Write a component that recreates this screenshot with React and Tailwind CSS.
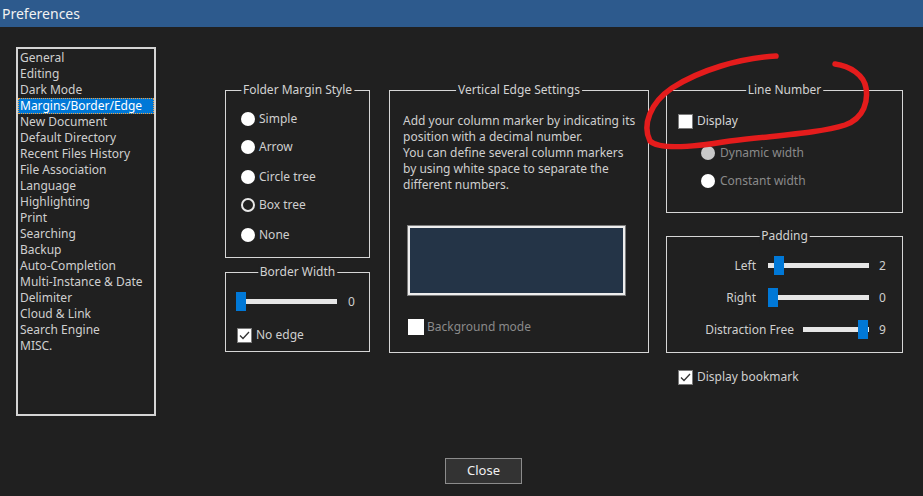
import React from 'react';

const pages = [
  'General', 'Editing', 'Dark Mode', 'Margins/Border/Edge', 'New Document', 'Default Directory',
  'Recent Files History', 'File Association', 'Language', 'Highlighting', 'Print', 'Searching',
  'Backup', 'Auto-Completion', 'Multi-Instance & Date', 'Delimiter', 'Cloud & Link',
  'Search Engine', 'MISC.',
];

const marginStyles = [
  { label: 'Simple', mt: 'mt-[21px]' },
  { label: 'Arrow', mt: 'mt-[14px]' },
  { label: 'Circle tree', mt: 'mt-[16px]' },
  { label: 'Box tree', mt: 'mt-[14px]', checked: true },
  { label: 'None', mt: 'mt-[16px]' },
];

function GroupBox({ title, className, children }) {
  return (
    <div className={`relative border border-[#d6d6d6] ${className}`}>
      <span className="absolute -top-[9px] left-1/2 -translate-x-1/2 bg-[#202020] px-[2px] leading-[16px] text-[#d2d2d2] whitespace-nowrap">
        {title}
      </span>
      {children}
    </div>
  );
}

function Radio({ checked, dim }) {
  if (checked) {
    return <span className="w-[14px] h-[14px] rounded-full border-2 border-[#e8e8e8] bg-[#202020] shrink-0" />;
  }
  return <span className={`w-[14px] h-[14px] rounded-full shrink-0 ${dim ? 'bg-[#c8c8c8]' : 'bg-white'}`} />;
}

function Checkbox({ checked }) {
  return (
    <span className="w-[15px] h-[15px] bg-white border border-[#7a7a7a] shrink-0 flex items-center justify-center">
      {checked && (
        <svg width="13" height="13" viewBox="0 0 13 13">
          <polyline points="2,6.5 5,9.5 11,3" fill="none" stroke="#333" strokeWidth="1.3" />
        </svg>
      )}
    </span>
  );
}

function Slider({ trackW, thumbLeft }) {
  return (
    <div className="relative h-[19px] flex items-center" style={{ width: trackW }}>
      <div className="w-full h-[5px] bg-[#e6e6e6]" />
      <div className="absolute top-0 w-[10px] h-[19px] bg-[#0078d7]" style={{ left: thumbLeft }} />
    </div>
  );
}

export default function App() {
  return (
    <div className="relative w-[923px] h-[496px] bg-[#202020] flex flex-col font-['Noto_Sans',sans-serif] text-[12px] text-[#cfcfcf] overflow-hidden">
      <div className="h-[27px] bg-[#2d5a8d] flex items-center pl-[2px] text-[14px] text-[#f2f2f2]">Preferences</div>

      <div className="flex pl-[16px] pt-[20px]">
        <div className="w-[140px] h-[369px] border-2 border-[#d4d4d4] pt-[1px] flex flex-col">
          {pages.map((p) =>
            p === 'Margins/Border/Edge' ? (
              <div key={p} className="h-[16px] leading-[14px] bg-[#0078d7] text-white pl-[1px] border border-dotted border-[#f0a040]">
                {p}
              </div>
            ) : (
              <div key={p} className="h-[16px] leading-[16px] pl-[2px]">{p}</div>
            )
          )}
        </div>

        <div className="ml-[69px] mt-[43px] flex flex-col">
          <GroupBox title="Folder Margin Style" className="w-[145px] h-[168px] pl-[15px] flex flex-col">
            {marginStyles.map((m) => (
              <div key={m.label} className={`flex items-center gap-[4px] h-[14px] ${m.mt}`}>
                <Radio checked={m.checked} />
                <span>{m.label}</span>
              </div>
            ))}
          </GroupBox>
          <GroupBox title="Border Width" className="mt-[14px] w-[145px] h-[80px] pl-[10px] flex flex-col">
            <div className="flex items-center mt-[19px]">
              <Slider trackW={101} thumbLeft={0} />
              <span className="ml-[11px]">0</span>
            </div>
            <div className="flex items-center gap-[4px] mt-[15px] ml-[1px]">
              <Checkbox checked />
              <span>No edge</span>
            </div>
          </GroupBox>
        </div>

        <GroupBox title="Vertical Edge Settings" className="ml-[19px] mt-[43px] w-[260px] h-[263px] pl-[13px] pt-[22px] flex flex-col">
          <p className="leading-[16px] w-[234px]">
            Add your column marker by indicating its position with a decimal number.
            <br />
            You can define several column markers by using white space to separate the different numbers.
          </p>
          <div className="mt-[33px] ml-[5px] w-[217px] h-[69px] bg-[#243447] border-2 border-[#eeeeee] outline outline-1 outline-[#7c7c7c]" />
          <div className="flex items-center gap-[3px] mt-[23px] ml-[5px]">
            <span className="w-[16px] h-[16px] bg-white shrink-0" />
            <span className="text-[#8a8a8a]">Background mode</span>
          </div>
        </GroupBox>

        <div className="ml-[17px] mt-[43px] flex flex-col">
          <GroupBox title="Line Number" className="w-[237px] h-[123px] pl-[11px] flex flex-col">
            <div className="flex items-center gap-[4px] mt-[21px]">
              <Checkbox />
              <span className="text-[#d6d6d6]">Display</span>
            </div>
            <div className="flex items-center gap-[5px] mt-[14px] ml-[23px]">
              <Radio dim />
              <span className="text-[#8a8a8a]">Dynamic width</span>
            </div>
            <div className="flex items-center gap-[5px] mt-[10px] ml-[23px]">
              <Radio />
              <span className="text-[#8a8a8a]">Constant width</span>
            </div>
          </GroupBox>

          <GroupBox title="Padding" className="mt-[23px] w-[237px] h-[117px] flex flex-col">
            <div className="flex items-center mt-[19px]">
              <span className="w-[89px] text-right">Left</span>
              <span className="ml-[12px]"><Slider trackW={101} thumbLeft={6} /></span>
              <span className="ml-[10px]">2</span>
            </div>
            <div className="flex items-center mt-[13px]">
              <span className="w-[89px] text-right">Right</span>
              <span className="ml-[12px]"><Slider trackW={101} thumbLeft={0} /></span>
              <span className="ml-[10px]">0</span>
            </div>
            <div className="flex items-center mt-[13px]">
              <span className="w-[127px] text-right">Distraction Free</span>
              <span className="ml-[9px]"><Slider trackW={66} thumbLeft={55} /></span>
              <span className="ml-[10px]">9</span>
            </div>
          </GroupBox>

          <div className="flex items-center gap-[4px] mt-[15px] ml-[12px]">
            <Checkbox checked />
            <span>Display bookmark</span>
          </div>
        </div>
      </div>

      <div className="flex pl-[445px] mt-[42px]">
        <button className="w-[77px] h-[26px] bg-[#333333] border border-[#8c8c8c] text-[13px] text-[#f0f0f0]">Close</button>
      </div>

      <svg className="absolute inset-0 pointer-events-none" width="923" height="496">
        <path
          d="M776,56 C740,58 700,70 672,88 C650,103 642,125 650,141 C660,151 700,146 730,141 C780,135 820,133 845,125 C865,118 868,100 866,88 C864,75 850,66 835,64"
          fill="none"
          stroke="#e41c1c"
          strokeWidth="5.5"
          strokeLinecap="round"
        />
      </svg>
    </div>
  );
}
